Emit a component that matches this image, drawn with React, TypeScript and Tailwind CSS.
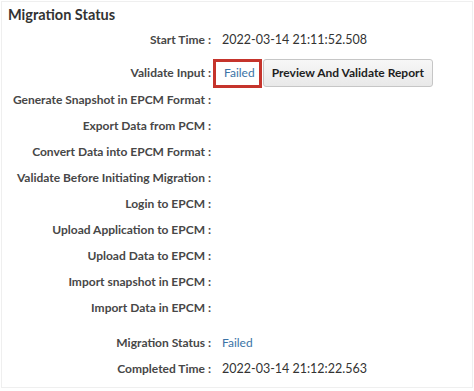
import React from "react";

const Failed = () => <span className="text-[12px] text-[#3b73a6]">Failed</span>;

const steps = [
  "Generate Snapshot in EPCM Format",
  "Export Data from PCM",
  "Convert Data into EPCM Format",
  "Validate Before Initiating Migration",
  "Login to EPCM",
  "Upload Application to EPCM",
  "Upload Data to EPCM",
  "Import snapshot in EPCM",
  "Import Data in EPCM",
];

const Label = ({ text }: { text: string }) => (
  <div className="w-[209px] shrink-0 whitespace-nowrap text-right text-[12px] font-bold text-[#474747]">{text} :</div>
);

const StatusRow = ({ label, children, className }: { label: string; children?: React.ReactNode; className?: string }) => (
  <div className={`flex items-center h-[26px] ${className ?? ""}`}>
    <Label text={label} />
    <div className="pl-[11px] whitespace-nowrap text-[12.5px] text-[#333]">{children}</div>
  </div>
);

export default function App() {
  return (
    <div className="w-[474px] h-[391px] bg-white p-[1px] font-['Lato',sans-serif]">
      <div className="h-[387px] border border-[#efefef] bg-white">
        <h2 className="pl-[6px] pt-[3px] text-[14.5px] font-bold text-[#333] leading-[20px]">Migration Status</h2>

        <div className="mt-[2px]">
          <StatusRow label="Start Time">2022-03-14 21:11:52.508</StatusRow>

          <div className="flex items-center h-[28px] mt-[6px]">
            <Label text="Validate Input" />
            <div className="ml-[2px] flex items-center h-[29px] border-[3px] border-[#c5342c] pl-[8px] pr-[4px]">
              <Failed />
            </div>
            <button className="ml-[1px] h-[28px] px-[8px] rounded-[3px] border border-[#c6c6c6] bg-gradient-to-b from-[#f7f7f7] to-[#e9e9e9] text-[12px] font-bold text-[#1e1e1e]">
              Preview And Validate Report
            </button>
          </div>

          {steps.map((s) => (
            <StatusRow key={s} label={s} />
          ))}

          <StatusRow label="Migration Status" className="mt-[9px]">
            <Failed />
          </StatusRow>
          <StatusRow label="Completed Time">2022-03-14 21:12:22.563</StatusRow>
        </div>
      </div>
    </div>
  );
}
